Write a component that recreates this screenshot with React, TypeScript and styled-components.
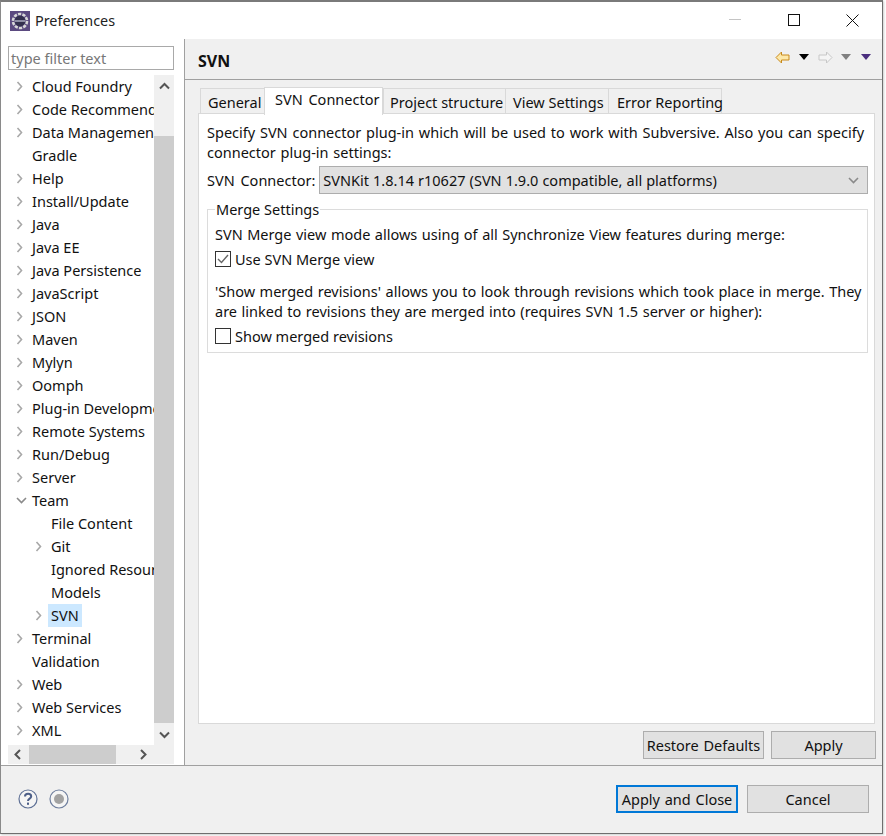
import React from 'react';
import styled, { createGlobalStyle } from 'styled-components';

const Global = createGlobalStyle`
  html, body { margin: 0; padding: 0; background: #fff; }
  body { width: 886px; height: 836px; overflow: hidden; font-family: "Noto Sans", "Open Sans", sans-serif; font-size: 14.5px; color: #111; }
  * { box-sizing: border-box; }
`;

const Frame = styled.div`
  width: 883px; height: 834px; margin-top: 0;
  border: 1px solid #6e6e6e; border-left-color: #8a8a8a; border-top: 2px solid #7a7a7a;
  display: flex; flex-direction: column; background: #f0f0f0;
  box-shadow: 1px 1px 2px rgba(0,0,0,.2);
`;
const TitleBar = styled.div`
  height: 37px; flex: none; background: #fff; display: flex; align-items: center; padding-left: 9px;
`;
const TitleText = styled.span`
  margin: -1px 0 0 5px; font-size: 14.4px; color: #222; flex: 1;
`;
const WinButton = styled.div`
  width: 59px; height: 37px; display: flex; align-items: center; justify-content: center; margin-top: -1px;
`;
const Main = styled.div`
  flex: 1; display: flex; min-height: 0;
`;
const Left = styled.div`
  width: 184px; flex: none; background: #fff; border-right: 1px solid #a0a0a0; padding: 7px 10px 0 7px; display: flex; flex-direction: column;
`;
const Filter = styled.div`
  height: 24px; flex: none; border: 1px solid #a9a9a9; color: #777; line-height: 22px; padding-left: 2px; margin-bottom: 5px;
`;
const TreeWrap = styled.div`
  width: 166px; height: 689px; display: grid; grid-template-columns: 146px 20px; grid-template-rows: 670px 19px;
`;
const TreeList = styled.div`
  overflow: hidden;
`;
const Row = styled.div<{ $depth?: number }>`
  height: 23px; display: flex; align-items: center; white-space: nowrap; padding-left: ${p => 8 + (p.$depth || 0) * 19}px;
`;
const Twisty = styled.span`
  width: 16px; flex: none; display: flex; align-items: center;
`;
const RowText = styled.span<{ $sel?: boolean }>`
  padding: 0 3px 0 3px; margin-left: -3px; height: 23px; line-height: 22px; color: #111;
  background: ${p => (p.$sel ? '#cce8ff' : 'transparent')};
`;
const VBar = styled.div`
  background: #f0f0f0; display: flex; flex-direction: column; height: 670px;
`;
const ThumbV = styled.div`
  background: #cdcdcd; height: 587px; flex: none;
`;
const ArrowCell = styled.div`
  height: 22px; width: 20px; flex: none; display: flex; align-items: center; justify-content: center;
`;
const Spacer = styled.div`flex: 1;`;
const HBar = styled.div`
  grid-column: 1 / 3; background: #f0f0f0; display: flex; height: 19px;
`;
const ThumbH = styled.div`
  background: #cdcdcd; width: 87px; margin-left: 1px;
`;
const HArrow = styled.div`
  width: 20px; height: 19px; display: flex; align-items: center; justify-content: center;
`;
const HRest = styled.div`
  width: 16px; background: #f0f0f0;
`;
const Right = styled.div`
  flex: 1; display: flex; flex-direction: column; min-width: 0;
`;
const Header = styled.div`
  height: 41px; flex: none; border-bottom: 1px solid #a0a0a0; display: flex; align-items: center; padding: 0 11px 0 13px; background: #f0f0f0;
`;
const Heading = styled.h1`
  flex: 1; margin: 4px 0 0; font-size: 16px; font-weight: 700; color: #111;
`;
const NavIcons = styled.div`
  display: flex; align-items: center; margin-top: -4px;
`;
const Body = styled.div`
  flex: 1; padding: 6px 7px 0 13px; display: flex; flex-direction: column; min-height: 0;
`;
const Tabs = styled.div`
  display: flex; align-items: flex-end; height: 28px; padding-left: 2px; flex: none; position: relative; z-index: 1;
`;
const Tab = styled.div<{ $active?: boolean; $w: number; $pad: number }>`
  width: ${p => p.$w}px; height: ${p => (p.$active ? 28 : 26)}px; white-space: nowrap; background: ${p => (p.$active ? '#fff' : '#f0f0f0')};
  padding-left: ${p => p.$pad}px; word-spacing: ${p => (p.$active ? 2 : 0)}px;
  border: 1px solid #d9d9d9; border-right-width: ${p => (p.$active ? 1 : 0)}px;
  border-bottom: ${p => (p.$active ? 'none' : '1px solid #d9d9d9')}; line-height: ${p => (p.$active ? 23 : 27)}px; margin-bottom: ${p => (p.$active ? -1 : 0)}px;
  &:last-child { border-right-width: 1px; }
`;
const Panel = styled.div`
  height: 611px; flex: none; width: 677px; background: #fff; border: 1px solid #d9d9d9; margin-top: -1px; padding: 8px 6px 0 8px; line-height: 20px;
`;
const Para = styled.p`
  margin: 0; white-space: pre; word-spacing: 1.05px;
`;
const ComboRow = styled.div`
  display: flex; align-items: center; margin-top: 4px; height: 28px; gap: 4px;
`;
const ComboLabel = styled.span`
  word-spacing: 2px;
`;
const Combo = styled.div`
  flex: 1; height: 28px; background: #e1e1e1; border: 1px solid #adadad; display: flex; align-items: center; padding: 0 8px 0 3px; justify-content: space-between; word-spacing: 0.3px;
`;
const Group = styled.fieldset`
  margin: 5px 0 0 0; padding: 0 7px 0 7px; border: 1px solid #dcdcdc; height: 154px; min-width: 0;
  legend { padding: 0 1px; line-height: 20px; }
`;
const GroupPara = styled(Para)<{ $top: number }>`
  margin-top: ${p => p.$top}px; word-spacing: 0.75px;
`;
const Check = styled.div<{ $top: number }>`
  display: flex; align-items: center; gap: 4px; height: 20px; margin-top: ${p => p.$top}px;
`;
const Box = styled.span`
  width: 16px; height: 16px; border: 1px solid #333; background: #fff; display: flex; align-items: center; justify-content: center; flex: none;
`;
const PanelButtons = styled.div`
  flex: none; display: flex; justify-content: flex-end; gap: 7px; padding: 7px 0 0 0; height: 41px; width: 678px;
`;
const Btn = styled.div<{ $w: number; $primary?: boolean }>`
  width: ${p => p.$w}px; height: 28px; background: #e1e1e1; text-align: center; line-height: ${p => (p.$primary ? 24 : 26)}px; word-spacing: 1px;
  border: ${p => (p.$primary ? '2px solid #0078d7' : '1px solid #adadad')}; white-space: nowrap; color: #111;
`;
const Footer = styled.div`
  height: 68px; flex: none; border-top: 1px solid #a0a0a0; background: #f0f0f0; display: flex; align-items: flex-start; padding: 19px 13px 0 17px;
`;
const HelpIcons = styled.div`
  display: flex; gap: 11px; flex: 1; margin-top: 4px;
`;
const FooterButtons = styled.div`
  display: flex; gap: 9px;
`;

const Chev = () => (
  <svg width="7" height="11" viewBox="0 0 7 11"><path d="M1.5 1 L5.5 5.5 L1.5 10" fill="none" stroke="#a8a8a8" strokeWidth="1.6" /></svg>
);
const ChevDown = () => (
  <svg width="11" height="7" viewBox="0 0 11 7"><path d="M1 1 L5.5 5.5 L10 1" fill="none" stroke="#8a8a8a" strokeWidth="1.6" /></svg>
);
const Dir = ({ d }: { d: string }) => (
  <svg width="11" height="11" viewBox="0 0 11 11"><path d={d} fill="none" stroke="#555" strokeWidth="2" /></svg>
);
const Tri = styled.svg.attrs({ width: 10, height: 6, viewBox: '0 0 10 6' })<{ $ml: number }>`
  margin-left: ${p => p.$ml}px;
`;
const NavArrow = styled.svg.attrs({ width: 15, height: 13, viewBox: '0 0 15 13' })<{ $ml?: number }>`
  margin-left: ${p => p.$ml || 0}px;
`;

type Item = [string, number, boolean, boolean?, boolean?];
const items: Item[] = [
  ['Cloud Foundry', 0, true], ['Code Recommenders', 0, true], ['Data Management', 0, true], ['Gradle', 0, false],
  ['Help', 0, true], ['Install/Update', 0, true], ['Java', 0, true], ['Java EE', 0, true], ['Java Persistence', 0, true],
  ['JavaScript', 0, true], ['JSON', 0, true], ['Maven', 0, true], ['Mylyn', 0, true], ['Oomph', 0, true],
  ['Plug-in Development', 0, true], ['Remote Systems', 0, true], ['Run/Debug', 0, true], ['Server', 0, true],
  ['Team', 0, true, true], ['File Content', 1, false], ['Git', 1, true], ['Ignored Resources', 1, false], ['Models', 1, false],
  ['SVN', 1, true, false, true], ['Terminal', 0, true], ['Validation', 0, false], ['Web', 0, true], ['Web Services', 0, true], ['XML', 0, true],
];

export default function App() {
  return (
    <>
      <Global />
      <Frame>
        <TitleBar>
          <svg width="20" height="20" viewBox="0 0 20 20">
            <rect width="20" height="20" fill="#5b4a80" />
            <circle cx="10" cy="10" r="7" fill="none" stroke="#d8d8d8" strokeWidth="2.6" strokeDasharray="3.2 1.2" />
            <circle cx="10" cy="10" r="5.4" fill="#33304e" />
            <rect x="4.6" y="9.4" width="10.8" height="1.2" fill="#c8c8dc" />
          </svg>
          <TitleText>Preferences</TitleText>
          <WinButton>
            <svg width="12" height="2" viewBox="0 0 12 2"><rect width="12" height="1" fill="#c4c4c4" /></svg>
          </WinButton>
          <WinButton>
            <svg width="12" height="12" viewBox="0 0 12 12"><rect x=".5" y=".5" width="11" height="11" fill="none" stroke="#111" /></svg>
          </WinButton>
          <WinButton>
            <svg width="13" height="13" viewBox="0 0 13 13"><path d="M.5.5 12.5 12.5M12.5.5.5 12.5" stroke="#111" fill="none" /></svg>
          </WinButton>
        </TitleBar>
        <Main>
          <Left>
            <Filter>type filter text</Filter>
            <TreeWrap>
              <TreeList>
                {items.map(([t, d, has, open, sel]) => (
                  <Row key={t} $depth={d}>
                    <Twisty>{has && (open ? <ChevDown /> : <Chev />)}</Twisty>
                    <RowText $sel={sel}>{t}</RowText>
                  </Row>
                ))}
              </TreeList>
              <VBar>
                <ArrowCell><Dir d="M1 7.5 L5.5 3 L10 7.5" /></ArrowCell>
                <Spacer />
                <ThumbV />
                <ArrowCell><Dir d="M1 3.5 L5.5 8 L10 3.5" /></ArrowCell>
              </VBar>
              <HBar>
                <HArrow><Dir d="M7 1 L2.5 5.5 L7 10" /></HArrow>
                <ThumbH />
                <HRest />
                <HArrow><Dir d="M4 1 L8.5 5.5 L4 10" /></HArrow>
              </HBar>
            </TreeWrap>
          </Left>
          <Right>
            <Header>
              <Heading>SVN</Heading>
              <NavIcons>
                <NavArrow><path d="M6.5 1 L1 6.5 L6.5 12 V9 H14 V4 H6.5 Z" fill="#fde8a8" stroke="#c98a1a" /></NavArrow>
                <Tri $ml={9}><path d="M0 0 H10 L5 6 Z" fill="#000" /></Tri>
                <NavArrow $ml={9}><path d="M8.5 1 L14 6.5 L8.5 12 V9 H1 V4 H8.5 Z" fill="#f5f5f5" stroke="#c8c8c8" /></NavArrow>
                <Tri $ml={8}><path d="M0 0 H10 L5 6 Z" fill="#808080" /></Tri>
                <Tri $ml={10}><path d="M0 0 H10 L5 6 Z" fill="#4b2f7f" /></Tri>
              </NavIcons>
            </Header>
            <Body>
              <Tabs>
                <Tab $w={64} $pad={7}>General</Tab>
                <Tab $w={119} $pad={10} $active>SVN Connector</Tab>
                <Tab $w={122} $pad={6}>Project structure</Tab>
                <Tab $w={103} $pad={7}>View Settings</Tab>
                <Tab $w={114} $pad={8}>Error Reporting</Tab>
              </Tabs>
              <Panel>
                <Para>{'Specify SVN connector plug-in which will be used to work with Subversive. Also you can specify\nconnector plug-in settings:'}</Para>
                <ComboRow>
                  <ComboLabel>SVN Connector:</ComboLabel>
                  <Combo>
                    <span>SVNKit 1.8.14 r10627 (SVN 1.9.0 compatible, all platforms)</span>
                    <ChevDown />
                  </Combo>
                </ComboRow>
                <Group>
                  <legend>Merge Settings</legend>
                  <GroupPara $top={5}>SVN Merge view mode allows using of all Synchronize View features during merge:</GroupPara>
                  <Check $top={5}>
                    <Box>
                      <svg width="12" height="10" viewBox="0 0 12 10"><path d="M1 5 L4.5 8.5 L11 1" fill="none" stroke="#666" strokeWidth="1.4" /></svg>
                    </Box>
                    Use SVN Merge view
                  </Check>
                  <GroupPara $top={12}>{"'Show merged revisions' allows you to look through revisions which took place in merge. They\nare linked to revisions they are merged into (requires SVN 1.5 server or higher):"}</GroupPara>
                  <Check $top={5}>
                    <Box />
                    Show merged revisions
                  </Check>
                </Group>
              </Panel>
              <PanelButtons>
                <Btn $w={121}>Restore Defaults</Btn>
                <Btn $w={105}>Apply</Btn>
              </PanelButtons>
            </Body>
          </Right>
        </Main>
        <Footer>
          <HelpIcons>
            <svg width="20" height="20" viewBox="0 0 20 20">
              <circle cx="10" cy="10" r="9" fill="#f5f5f5" stroke="#5f7196" strokeWidth="1.2" />
              <path d="M7 7.5 C7 3.8 13.2 3.8 13.2 7.5 C13.2 9.7 10 9.6 10 12" fill="none" stroke="#4d5f88" strokeWidth="2" />
              <rect x="9" y="13.6" width="2" height="2.2" fill="#4d5f88" />
            </svg>
            <svg width="20" height="20" viewBox="0 0 20 20">
              <circle cx="10" cy="10" r="9" fill="#f5f5f5" stroke="#6f7f9e" strokeWidth="1.2" />
              <circle cx="10" cy="10" r="5" fill="#a2a2a2" />
            </svg>
          </HelpIcons>
          <FooterButtons>
            <Btn $w={122} $primary>Apply and Close</Btn>
            <Btn $w={122}>Cancel</Btn>
          </FooterButtons>
        </Footer>
      </Frame>
    </>
  );
}
